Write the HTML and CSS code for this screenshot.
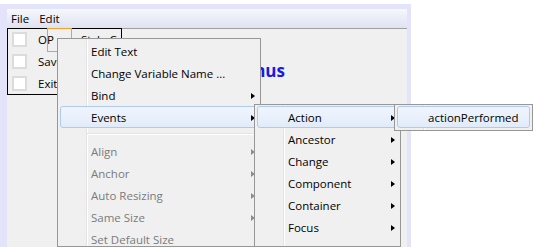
FILE: index.html
```html
<!DOCTYPE html>
<html>
<head>
<meta charset="utf-8">
<link rel="stylesheet" href="styles.css">
</head>
<body>
<div class="frame">
  <div class="menubar">
    <span class="mb-item">File</span>
    <span class="mb-item">Edit</span>
  </div>
  <div class="content">
    <div class="panel">
      <div class="row">
        <span class="check"></span>
        <span class="label">OP</span>
        <span class="label style-label">Style Co</span>
      </div>
      <div class="row">
        <span class="check"></span>
        <span class="label">Save</span>
      </div>
      <div class="row">
        <span class="check"></span>
        <span class="label">Exit</span>
      </div>
    </div>
    <div class="title-box"><span class="title">Menus</span></div>
    <div class="focus-box"></div>
  </div>
</div>

<div class="menu menu-main">
  <div class="item"><span>Edit Text</span></div>
  <div class="item"><span>Change Variable Name ...</span></div>
  <div class="item"><span>Bind</span><i class="arrow"></i></div>
  <div class="item hot"><span>Events</span><i class="arrow"></i></div>
  <div class="sep"></div>
  <div class="item off"><span>Align</span><i class="arrow"></i></div>
  <div class="item off"><span>Anchor</span><i class="arrow"></i></div>
  <div class="item off"><span>Auto Resizing</span><i class="arrow"></i></div>
  <div class="item off"><span>Same Size</span><i class="arrow"></i></div>
  <div class="item off"><span>Set Default Size</span></div>
</div>

<div class="menu menu-events">
  <div class="item hot"><span>Action</span><i class="arrow"></i></div>
  <div class="item"><span>Ancestor</span><i class="arrow"></i></div>
  <div class="item"><span>Change</span><i class="arrow"></i></div>
  <div class="item"><span>Component</span><i class="arrow"></i></div>
  <div class="item"><span>Container</span><i class="arrow"></i></div>
  <div class="item"><span>Focus</span><i class="arrow"></i></div>
  <div class="item"><span>Hierarchy</span><i class="arrow"></i></div>
</div>

<div class="menu menu-action">
  <div class="item hot"><span>actionPerformed</span></div>
</div>
</body>
</html>
```
FILE: styles.css
```css
html, body {
  margin: 0;
  padding: 0;
}
body {
  width: 537px;
  height: 247px;
  overflow: hidden;
  background: #ffffff;
  position: relative;
  font-family: "Open Sans", "Noto Sans", sans-serif;
  font-size: 11.5px;
  color: #000;
}
.frame {
  margin-top: 4px;
  width: 400px;
  height: 243px;
  border-style: solid;
  border-color: #e3e3fb;
  border-width: 5px 4px 0 7px;
  display: flex;
  flex-direction: column;
}
.menubar {
  height: 19px;
  border-bottom: 1px solid #a0a0a0;
  background: linear-gradient(#f7f8fc 0%, #eef0f8 35%, #dfe3f1 100%);
  display: flex;
  align-items: center;
  gap: 10px;
  padding-left: 4px;
  line-height: 19px;
}
.content {
  flex: 1;
  background: #f0f0f0;
  display: flex;
  align-items: flex-start;
  position: relative;
}
.panel {
  margin-top: -1px;
  height: 62px;
  width: 109px;
  border: 1px solid #000;
  padding: 3px 0 0 4px;
}
.row {
  height: 22px;
  display: flex;
  align-items: flex-start;
  white-space: nowrap;
}
.check {
  width: 15px;
  height: 15px;
  background: #fff;
  box-shadow: inset 0 0 0 2px #dcdcdc;
  flex: none;
}
.label {
  margin-left: 11px;
  line-height: 15px;
}
.style-label {
  margin-left: 27px;
}
.title-box {
  flex: 1;
  text-align: right;
  padding-right: 122px;
  padding-top: 30px;
}
.title {
  font-family: "Open Sans", sans-serif;
  font-weight: bold;
  font-size: 17px;
  color: #1a1ae8;
}
.focus-box {
  position: absolute;
  left: 40px;
  top: -1px;
  width: 23px;
  height: 22px;
  border: 1px solid #f0a030;
}
.menu {
  position: absolute;
  background-color: #f0f0f0;
  background-image: linear-gradient(to right, transparent 28px, #e2e3e3 28px, #e2e3e3 29px, #ffffff 29px, #ffffff 30px, transparent 30px);
  border: 1px solid #979797;
  padding: 1px 2px;
  box-sizing: border-box;
  overflow: hidden;
}
.menu-main {
  left: 57px;
  top: 38px;
  width: 204px;
  height: 209px;
}
.menu-events {
  left: 254px;
  top: 104px;
  width: 147px;
  height: 143px;
}
.menu-action {
  left: 394px;
  top: 104px;
  width: 139px;
  height: 27px;
}
.item {
  height: 22px;
  box-sizing: border-box;
  padding: 1px 2px 0 30px;
  display: flex;
  align-items: center;
  justify-content: space-between;
  white-space: nowrap;
  border: 1px solid transparent;
  border-radius: 3px;
}
.item.hot {
  border-color: #aecbef;
  background: linear-gradient(#f0f5fd, #e1ebf9);
}
.item.off {
  color: #7b7b7b;
}
.arrow {
  width: 0;
  height: 0;
  border-left: 4px solid #000;
  border-top: 3.5px solid transparent;
  border-bottom: 3.5px solid transparent;
}
.item.off .arrow {
  border-left-color: #8d8d8d;
}
.sep {
  height: 12px;
  margin: 0 4px 0 27px;
  background: linear-gradient(transparent 5px, #e2e3e3 5px, #e2e3e3 6px, #fff 6px, #fff 7px, transparent 7px);
}
```
